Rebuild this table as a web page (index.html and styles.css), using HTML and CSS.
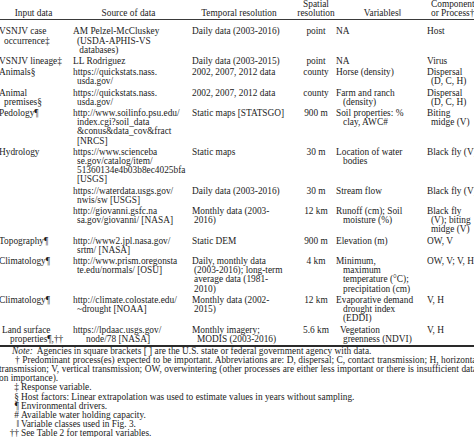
FILE: index.html
```html
<!DOCTYPE html>
<html lang="en">
<head>
<meta charset="utf-8">
<title>Table 1. Data sources</title>
<link rel="stylesheet" href="styles.css">
</head>
<body>
<div class="page">
  <div class="tbl">
    <div class="hd c1">Input data</div>
    <div class="hd c2">Source of data</div>
    <div class="hd c3">Temporal resolution</div>
    <div class="hd c4">Spatial<br>resolution</div>
    <div class="hd c5">Variables‖</div>
    <div class="hd c6">Component<br>or Process†</div>
    <div class="rule-top"></div>

    <div class="c c1">VSNJV case<br>occurrence‡</div>
    <div class="c c2">AM Pelzel-McCluskey<br>(USDA-APHIS-VS<br>&nbsp;databases)</div>
    <div class="c c3">Daily data (2003-2016)</div>
    <div class="c c4">point</div>
    <div class="c c5">NA</div>
    <div class="c c6">Host</div>

    <div class="c c1">VSNJV lineage‡</div>
    <div class="c c2">LL Rodriguez</div>
    <div class="c c3">Daily data (2003-2015)</div>
    <div class="c c4">point</div>
    <div class="c c5">NA</div>
    <div class="c c6">Virus</div>

    <div class="c c1">Animals§</div>
    <div class="c c2">https://quickstats.nass.<br>usda.gov/</div>
    <div class="c c3">2002, 2007, 2012 data</div>
    <div class="c c4">county</div>
    <div class="c c5">Horse (density)</div>
    <div class="c c6">Dispersal<br>(D, C, H)</div>

    <div class="c c1">Animal<br>premises§</div>
    <div class="c c2">https://quickstats.nass.<br>usda.gov/</div>
    <div class="c c3">2002, 2007, 2012 data</div>
    <div class="c c4">county</div>
    <div class="c c5">Farm and ranch<br>(density)</div>
    <div class="c c6">Dispersal<br>(D, C, H)</div>

    <div class="c c1">Pedology¶</div>
    <div class="c c2">http://www.soilinfo.psu.edu/<br>index.cgi?soil_data<br>&amp;conus&amp;data_cov&amp;fract<br>[NRCS]</div>
    <div class="c c3">Static maps [STATSGO]</div>
    <div class="c c4">900 m</div>
    <div class="c c5">Soil properties: %<br>clay, AWC#</div>
    <div class="c c6">Biting<br>midge (V)</div>

    <div class="c c1">Hydrology</div>
    <div class="c c2">https://www.scienceba<br>se.gov/catalog/item/<br>51360134e4b03b8ec4025bfa<br>[USGS]</div>
    <div class="c c3">Static maps</div>
    <div class="c c4">30 m</div>
    <div class="c c5">Location of water<br>bodies</div>
    <div class="c c6">Black fly (V)</div>

    <div class="c c1"></div>
    <div class="c c2">https://waterdata.usgs.gov/<br>nwis/sw [USGS]</div>
    <div class="c c3">Daily data (2003-2016)</div>
    <div class="c c4">30 m</div>
    <div class="c c5">Stream flow</div>
    <div class="c c6">Black fly (V)</div>

    <div class="c c1"></div>
    <div class="c c2">http://giovanni.gsfc.na<br>sa.gov/giovanni/ [NASA]</div>
    <div class="c c3">Monthly data (2003-<br>2016)</div>
    <div class="c c4">12 km</div>
    <div class="c c5">Runoff (cm); Soil<br>moisture (%)</div>
    <div class="c c6">Black fly<br>(V); biting<br>midge (V)</div>

    <div class="c c1">Topography¶</div>
    <div class="c c2">http://www2.jpl.nasa.gov/<br>srtm/ [NASA]</div>
    <div class="c c3">Static DEM</div>
    <div class="c c4">900 m</div>
    <div class="c c5">Elevation (m)</div>
    <div class="c c6">OW, V</div>

    <div class="c c1">Climatology¶</div>
    <div class="c c2">http://www.prism.oregonsta<br>te.edu/normals/ [OSU]</div>
    <div class="c c3">Daily, monthly data<br>(2003-2016); long-term<br>average data (1981-<br>2010)</div>
    <div class="c c4">4 km</div>
    <div class="c c5">Minimum,<br>maximum<br>temperature (°C);<br>precipitation (cm)</div>
    <div class="c c6">OW, V; V, H</div>

    <div class="c c1">Climatology¶</div>
    <div class="c c2">http://climate.colostate.edu/<br>~drought [NOAA]</div>
    <div class="c c3">Monthly data (2002-<br>2015)</div>
    <div class="c c4">12 km</div>
    <div class="c c5">Evaporative demand<br>drought index<br>(EDDI)</div>
    <div class="c c6">V, H</div>

    <div class="c c1 last">Land surface<br>properties¶,††</div>
    <div class="c c2 last">https://lpdaac.usgs.gov/<br>node/78 [NASA]</div>
    <div class="c c3 last">Monthly imagery;<br>MODIS (2003-2016)</div>
    <div class="c c4">5.6 km</div>
    <div class="c c5 last">Vegetation<br>greenness (NDVI)</div>
    <div class="c c6">V, H</div>
    <div class="rule-bottom"></div>
  </div>

  <div class="notes">
    <div class="ln l-note"><i class="note-label">Note:</i>Agencies in square brackets [ ] are the U.S. state or federal government agency with data.</div>
    <div class="ln l-first jus">† Predominant process(es) expected to be important. Abbreviations are: D, dispersal; C, contact transmission; H, horizontal</div>
    <div class="ln jus l-cont">transmission; V, vertical transmission; OW, overwintering (other processes are either less important or there is insufficient data</div>
    <div class="ln">on importance).</div>
    <div class="ln"><span class="sym">‡</span>Response variable.</div>
    <div class="ln"><span class="sym">§</span>Host factors: Linear extrapolation was used to estimate values in years without sampling.</div>
    <div class="ln"><span class="sym">¶</span>Environmental drivers.</div>
    <div class="ln"><span class="sym">#</span>Available water holding capacity.</div>
    <div class="ln"><span class="sym">‖</span>Variable classes used in Fig. 3.</div>
    <div class="ln"><span class="sym">††</span>See Table 2 for temporal variables.</div>
  </div>
</div>
</body>
</html>
```

FILE: styles.css
```css
html, body {
  margin: 0;
  padding: 0;
  background: #ffffff;
  overflow: hidden;
}

body {
  width: 474px;
  height: 437px;
  font-family: "Liberation Serif", "Times New Roman", serif;
  font-size: 9.35px;
  line-height: 9.2px;
  color: #1c1c1c;
}

.page {
  margin-left: -1px;
  margin-top: -1px;
  width: 520px;
}

.tbl {
  display: grid;
  grid-template-columns: 74px 119px 100px 44px 91px 92px;
  row-gap: 2px;
  align-items: start;
}

.hd {
  align-self: end;
  text-align: center;
  white-space: nowrap;
}

.hd.c1 { padding-right: 10px; }
.hd.c2 { padding-right: 12px; }
.hd.c3 { padding-right: 8px; }
.hd.c4 { padding-top: 1px; }
.hd.c5 { padding-left: 2px; }
.hd.c6 { padding-right: 50px; padding-top: 1px; }

.rule-top {
  grid-column: 1 / -1;
  height: 1px;
  background: #3a3a3a;
  margin-top: -1px;
  margin-bottom: 5px;
}

.rule-bottom {
  grid-column: 1 / -1;
  height: 2px;
  background: #2a2a2a;
  margin-top: -1px;
}

.c {
  white-space: nowrap;
}

.c1 { padding-left: 5px; text-indent: -5px; }
.c2 { padding-left: 4px; text-indent: -4px; }
.c3 { padding-left: 2px; text-indent: -2px; }
.c4 { text-align: center; padding-left: 4px; }
.c5 { padding-left: 7px; text-indent: -7px; }
.c6 { padding-left: 4px; text-indent: -4px; }

.hd.c1, .hd.c2, .hd.c3, .hd.c5, .hd.c6 { text-indent: 0; }

.c1.last { padding-left: 11px; text-indent: -8px; }
.c2.last { padding-left: 13px; text-indent: -13px; }
.c3.last { padding-left: 5px; text-indent: -5px; }
.c5.last { padding-left: 7px; text-indent: -3px; }

.notes {
  padding-top: 0;
}

.ln {
  white-space: nowrap;
  height: 9.15px;
  line-height: 9.15px;
}

.l-note { padding-left: 13px; }
.note-label { margin-right: 4px; }
.l-first { padding-left: 16px; }

.jus {
  white-space: normal;
  overflow: visible;
  text-align: justify;
  text-align-last: justify;
  width: 464px;
}

.l-cont {
  width: 478px;
}

.sym {
  display: inline-block;
  width: 20px;
  text-align: right;
  margin-right: 2px;
}
```
